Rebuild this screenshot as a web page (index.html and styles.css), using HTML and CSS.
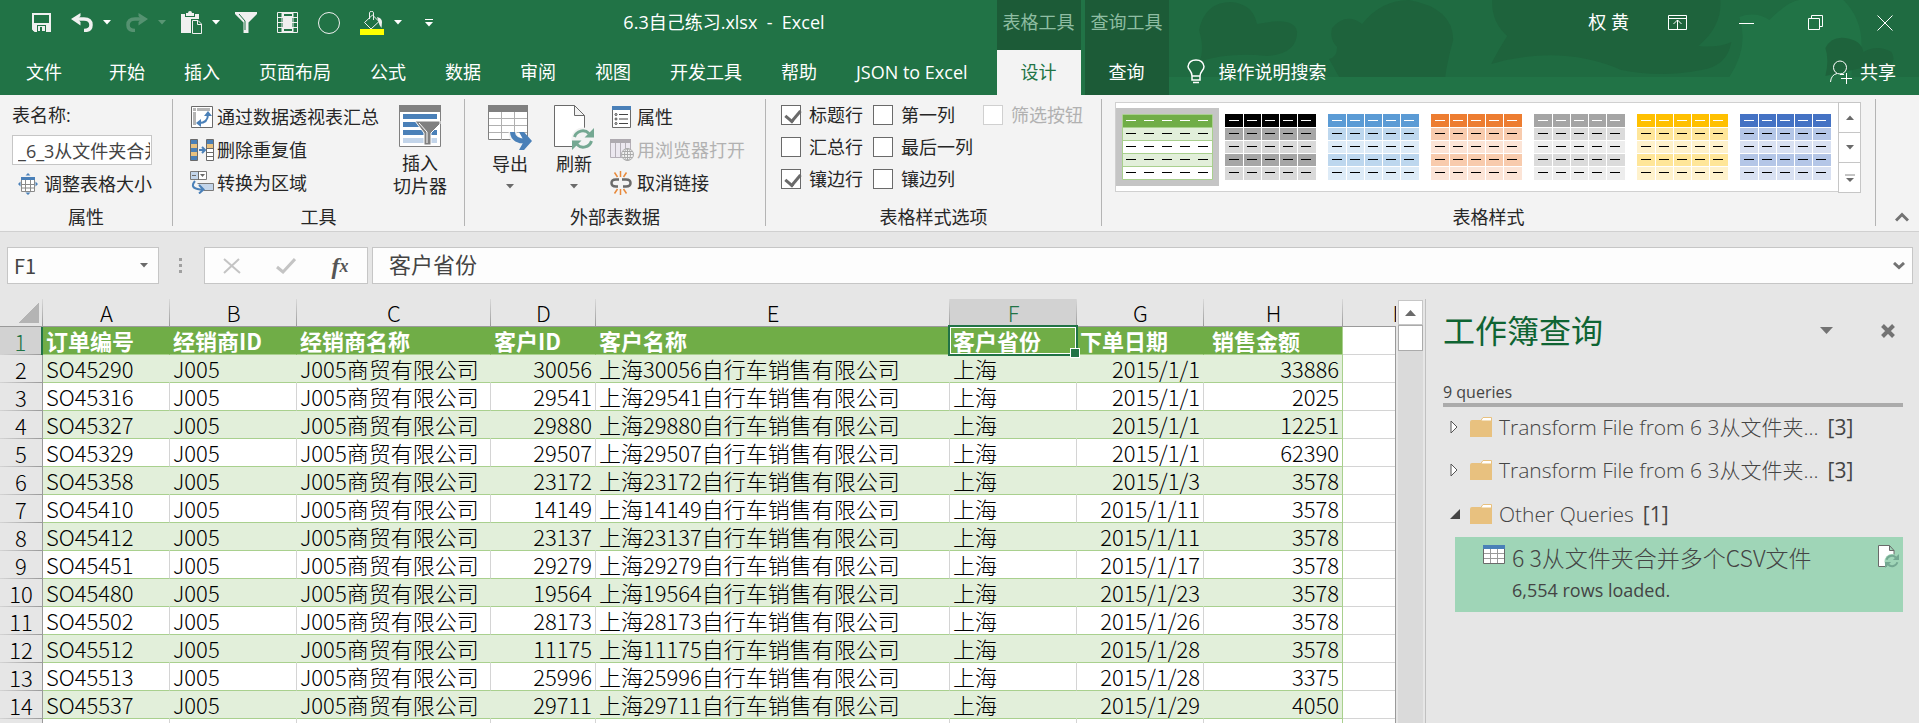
FILE: index.html
```html
<!DOCTYPE html>
<html lang="zh-CN">
<head>
    <meta charset="UTF-8">
    <meta name="viewport" content="width=device-width, initial-scale=1.0">
    <title>6.3自己练习.xlsx - Excel</title>
    <link rel="stylesheet" href="styles.css">
</head>
<body>
    <!-- Shared symbols -->
    <svg class="sprite" aria-hidden="true">
        <symbol id="caret" viewBox="0 0 8 5"><path d="M0 0h8L4 4.5z" fill="currentColor"/></symbol>
        <symbol id="thumb" viewBox="0 0 91 66">
            <path d="M0 0h91v13H0z" fill="var(--head)"/>
            <path d="M0 14h91v12H0zM0 40h91v12H0z" fill="var(--odd)"/>
            <path d="M0 27h91v12H0zM0 53h91v13H0z" fill="var(--even)"/>
            <path d="M18.5 0v66M36.5 0v66M54.5 0v66M72.5 0v66" stroke="#fff"/>
            <path d="M4 6.5h83" stroke="#fff" stroke-dasharray="10 8"/>
            <path d="M4 19.5h83M4 32.5h83M4 45.5h83M4 58.5h83" stroke="#000" stroke-dasharray="10 8"/>
        </symbol>
        <symbol id="thumb-light" viewBox="0 0 91 66">
            <path d="M.5 .5h90v65H.5z" fill="#fff" stroke="#a9d08e"/>
            <path d="M1 1h89v12H1z" fill="#70ad47"/>
            <path d="M1 14h89v12H1zM1 40h89v12H1z" fill="#e2efda"/>
            <path d="M0 13.5h91M0 26.5h91M0 39.5h91M0 52.5h91" stroke="#a9d08e"/>
            <path d="M4 6.5h83" stroke="#fff" stroke-dasharray="10 8"/>
            <path d="M4 19.5h83M4 32.5h83M4 45.5h83M4 58.5h83" stroke="#000" stroke-dasharray="10 8"/>
        </symbol>
        <symbol id="refresh" viewBox="0 0 22 22">
            <path d="M2.500 9A8.700 8.700 0 0 1 17 5.500M19.500 13A8.700 8.700 0 0 1 5 16.500" fill="none" stroke="#74a892" stroke-width="3"/>
            <path d="M22 0v9.500h-9.500zM0 22v-9.500h9.500z" fill="#74a892"/>
        </symbol>
        <symbol id="folder" viewBox="0 0 22 20">
            <path d="M10.500 4 13 .500h8.500V6h-11z" fill="#fff" stroke="#e8c17f"/>
            <path d="M0 5q0-2 2-2h8.500l2 .5H22V20H0z" fill="#e8c17f"/>
        </symbol>
    </svg>

    <header class="app-header">
        <div class="header-main">
            <div class="title-row">
                <div class="qat">
                    <button aria-label="保存" class="single">
                        <svg width="19" height="19" viewBox="0 0 19 19"><path d="M1 1h17v17H3l-2-2z" fill="none" stroke="#f0f0f0" stroke-width="2"/><path d="M1 10h17v8H1z" fill="#f0f0f0"/><path d="M5 12h9v7H5z" fill="#217346"/><path d="M6 13h7v5H6z" fill="#f0f0f0"/><path d="M8 14h2v4H8z" fill="#217346"/></svg>
                    </button>
                    <button aria-label="撤消">
                        <svg width="22" height="19" viewBox="0 0 22 19"><path d="M3 6h10q7 0 7 6 0 5.500-7 5.500" fill="none" stroke="#f0f0f0" stroke-width="3.500"/><path d="M9.500 0v3L6.500 6l3 3v3.500L0 6z" fill="#f0f0f0"/></svg>
                        <svg class="caret"><use href="#caret"/></svg>
                    </button>
                    <button aria-label="恢复" class="dim">
                        <svg width="22" height="19" viewBox="0 0 22 19"><path d="M19 6H9Q2 6 2 12q0 5.500 7 5.500" fill="none" stroke="#f0f0f0" stroke-width="3.500"/><path d="M12.500 0v3l3 3-3 3v3.500L22 6z" fill="#f0f0f0"/></svg>
                        <svg class="caret"><use href="#caret"/></svg>
                    </button>
                    <button aria-label="粘贴">
                        <svg width="21" height="23" viewBox="0 0 21 23"><path d="M0 3h4v3h10V3h4v5h-8v14H0z" fill="#f0f0f0"/><path d="M5 5V2h2q0-2 2-2t2 2h2v3z" fill="#f0f0f0"/><path d="M11.500 9.500h5.500l3.500 3.500v9.500h-9z" fill="#217346" stroke="#f0f0f0"/><path d="M16.500 9.500v4h4" fill="none" stroke="#f0f0f0"/></svg>
                        <svg class="caret"><use href="#caret"/></svg>
                    </button>
                    <button aria-label="筛选" class="single">
                        <svg width="22" height="21" viewBox="0 0 22 21"><path d="M0 0h22v2l-8.500 8.500V21h-5V10.500L0 2z" fill="#f0f0f0"/><path d="M4 2l6 7v9" fill="none" stroke="#217346"/></svg>
                    </button>
                    <button aria-label="表格" class="single">
                        <svg width="21" height="21" viewBox="0 0 21 21"><path d="M.5 .5h20v20H.500zM5 0v21M16 0v21M0 5.500h21M0 10.500h21M0 15.500h21" fill="none" stroke="#f0f0f0"/><path d="M6 6h9v4H6zM6 11h9v4H6zM5 .5h11v5H5zM5 16h11v4H5z" fill="#f0f0f0"/><path d="M7 2h8v2H7zM7 17h8v2H7z" fill="#217346"/></svg>
                    </button>
                    <button aria-label="椭圆" class="single">
                        <svg width="22" height="22" viewBox="0 0 22 22"><circle cx="11" cy="11" r="10.500" fill="none" stroke="#f0f0f0"/></svg>
                    </button>
                    <button aria-label="填充颜色">
                        <svg width="24" height="24" viewBox="0 0 24 24"><path d="M0 18h24v6H0z" fill="#ff0"/><path d="M4.500 11.500 12.500 4l6.500 6.500-8 7.500zM9.500 8V1.500q0-1 2-1t2 1V9" fill="none" stroke="#f0f0f0"/><path d="M17 6q5 1 5 5l-.5 6-2-3z" fill="#f0f0f0"/></svg>
                        <svg class="caret"><use href="#caret"/></svg>
                    </button>
                    <button aria-label="自定义快速访问工具栏" class="more">
                        <svg width="8" height="8" viewBox="0 0 8 8"><path d="M0 .5h8" stroke="#fff"/><path d="M0 3h8L4 7.500z" fill="#fff"/></svg>
                    </button>
                </div>
                <h1 class="doc-title">6.3自己练习.xlsx&nbsp; - &nbsp;Excel</h1>
            </div>
            <nav class="tabs">
                <button>文件</button>
                <button>开始</button>
                <button>插入</button>
                <button>页面布局</button>
                <button>公式</button>
                <button>数据</button>
                <button>审阅</button>
                <button>视图</button>
                <button>开发工具</button>
                <button>帮助</button>
                <button>JSON to Excel</button>
            </nav>
        </div>
        <div class="context-group">
            <span>表格工具</span>
            <button class="active">设计</button>
        </div>
        <div class="context-group">
            <span>查询工具</span>
            <button>查询</button>
        </div>
        <div class="header-side">
            <svg class="header-art" viewBox="0 0 750 77" preserveAspectRatio="none" aria-hidden="true">
                <path d="M0 0h750v77H0z" fill="#1f6b41"/>
                <path d="M30 30Q36 2 62 2q22 2 26 22 38-8 40 8 0 22-30 24-40-4-68 6 6-12 0-32zM163 28q14-16 30-4Q212 0 240 0q44 8 44 40-6 22-8 37H170l-10-18q8-2 8-12-8-8-5-19zM323 0h228q2 26-22 46 20 2 33-4-4 24-30 28-40 8-80 0-60-26-130-6 6-12 16-28-16-14-15-36z" fill="#1e633c"/>
                <path d="M600 20q22-22 34-20h40q20 20 18 50-10 10-10 27H560q20-30 10-60 16-6 30 3z" fill="#217346"/>
                <path d="M656 48q6-12 20-10 16 2 18 14 14-8 28 0 6 10-6 18l-24-2-36 8q4-16 0-28z" fill="#1e633c"/>
            </svg>
            <div class="window-bar">
                <span class="user">权 黄</span>
                <button aria-label="功能区显示选项"><svg width="20" height="16" viewBox="0 0 20 16"><path d="M.5 .5h18v14H.500zM.500 3.500h18M9.500 14V5M5.500 9l4-4 4 4" fill="none" stroke="#fff"/></svg></button>
                <button aria-label="最小化"><svg width="16" height="16" viewBox="0 0 16 16"><path d="M0 8.500h15" stroke="#fff"/></svg></button>
                <button aria-label="还原"><svg width="16" height="16" viewBox="0 0 16 16"><path d="M.5 3.500h11v11H.500zM3.500 3V.500h11v11H12" fill="none" stroke="#fff"/></svg></button>
                <button aria-label="关闭"><svg width="16" height="16" viewBox="0 0 16 16"><path d="M.5 .5l15 15M15.500 .5l-15 15" stroke="#fff"/></svg></button>
            </div>
            <div class="search-row">
                <label for="tell-me" aria-label="搜索">
                    <svg width="18" height="25" viewBox="0 0 18 25"><path d="M5 17q0-3-2-5.500T1 7.500Q2 1 9 1t8 6.500q0 2-2 4.500t-2 5zM5 17v4h8v-4" fill="none" stroke="#fff" stroke-width="1.500"/><path d="M6 23.500h6" stroke="#fff" stroke-width="1.500"/></svg>
                </label>
                <input id="tell-me" type="text" placeholder="操作说明搜索">
                <button class="share">
                    <svg width="22" height="24" viewBox="0 0 22 24"><circle cx="10" cy="7.500" r="6.500" fill="none" stroke="#fff"/><path d="M.5 22Q1 15 7 13.500M10 14.500l4 0M11 18.500h11M16.500 13v11" fill="none" stroke="#fff"/></svg>
                    共享
                </button>
            </div>
        </div>
    </header>

    <section class="ribbon">
        <div class="group group-props">
            <div class="group-body stack">
                <label for="table-name">表名称:</label>
                <input id="table-name" type="text" value="_6_3从文件夹合并多个CSV文件">
                <button class="cmd">
                    <svg width="20" height="22" viewBox="0 0 20 22"><path d="M3.500 4.500h13v14h-13zM7.500 7v11M12.500 7v11M4 11.500h12M4 15h12" fill="#fff" stroke="#8a8a8a"/><path d="M3 4h14v3H3z" fill="#4a80b8"/><path d="M10 0l2.500 2.500h-5zM10 22l2.500-2.500h-5zM0 11l2.500-2.500v5zM20 11l-2.500-2.500v5z" fill="#4a80b8"/></svg>
                    调整表格大小
                </button>
            </div>
            <div class="group-label">属性</div>
        </div>

        <div class="group group-tools">
            <div class="group-body">
                <div class="rows">
                    <button class="cmd">
                        <svg width="24" height="22" viewBox="0 0 24 22"><path d="M1.500 .5h21v21h-21z" fill="#fff" stroke="#6a6a6a"/><path d="M3 2h3v3H3zM7 2h13v3H7zM3 6h3v13H3z" fill="#b5b5b5"/><path d="M9 17q9 0 9-9" fill="none" stroke="#4a80b8" stroke-width="2"/><path d="M14 10l4-5 4 5zM11 13l-5 4 5 4z" fill="#4a80b8"/></svg>
                        通过数据透视表汇总
                    </button>
                    <button class="cmd">
                        <svg width="24" height="22" viewBox="0 0 24 22"><path d="M.5 .5h7v21h-7z" fill="#4a80b8" stroke="#6a6a6a"/><path d="M1 5h6v4H1zM1 13h6v4H1z" fill="#e8c17f"/><path d="M16.500 .5h7v21h-7zM17 9.500h6M17 13.500h6M17 17.500h6" fill="#fff" stroke="#6a6a6a"/><path d="M17 1h6v4h-6z" fill="#4a80b8"/><path d="M17 5h6v4h-6z" fill="#e8c17f"/><path d="M9 11h5M12 8l3 3-3 3" fill="none" stroke="#4a80b8" stroke-width="2"/></svg>
                        删除重复值
                    </button>
                    <button class="cmd">
                        <svg width="24" height="23" viewBox="0 0 24 23"><path d="M.5 .5h16v8H.500z" fill="#fff" stroke="#7a7a7a"/><path d="M1 1h7v7H1z" fill="#c3d5ea"/><path d="M2 4.500h4M8.500 0v9" stroke="#6a6a6a"/><path d="M10 3h5l-2.500 3z" fill="#6a6a6a"/><path d="M7.500 12.500h16v7h-10" fill="#c3d5ea" stroke="#7a7a7a"/><path d="M5 10q-6 7 5 8.500h2M9 14l4.500 4.500L9 22.500" fill="none" stroke="#4a80b8" stroke-width="2"/></svg>
                        转换为区域
                    </button>
                </div>
                <button class="big slicer">
                    <svg width="42" height="42" viewBox="0 0 42 42"><path d="M.5 .5h41v41H.500z" fill="#fff" stroke="#808080"/><path d="M0 0h42v7H0z" fill="#808080"/><path d="M4 9h34v5H4zM4 17h34v5H4zM4 25h34v5H4z" fill="#4a80b8"/><path d="M4 33h34v5H4z" fill="#c3d5ea"/><path d="M16 16h25v3l-9 9v12h-7V28z" fill="#808080" stroke="#fff"/><path d="M20 18l8 9v11" fill="none" stroke="#fff"/></svg>
                    <span>插入<br>切片器</span>
                </button>
            </div>
            <div class="group-label">工具</div>
        </div>

        <div class="group group-data">
            <div class="group-body">
                <button class="big">
                    <svg width="44" height="45" viewBox="0 0 44 45"><path d="M.5 .5h39v34H.500z" fill="#fff" stroke="#808080"/><path d="M13.500 7v28M26.500 7v28M1 13.500h38M1 20.500h38M1 27.500h38" stroke="#b0b0b0"/><path d="M0 0h40v7H0z" fill="#808080"/><path d="M24.500 27Q25 37 36 37" fill="none" stroke="#f3f3f3" stroke-width="8"/><path d="M24.500 27Q25 37 40 36" fill="none" stroke="#4a80b8" stroke-width="5"/><path d="M31 27h5l8 9-8 9h-5l5-9z" fill="#4a80b8"/></svg>
                    <span>导出</span>
                    <svg class="caret"><use href="#caret"/></svg>
                </button>
                <button class="big refresh">
                    <svg width="40" height="45" viewBox="0 0 40 45"><path d="M.5 .5h20l10 10v31H.500zM20.500 .5v10h10" fill="#fff" stroke="#6a6a6a"/><circle cx="29" cy="34" r="11.500" fill="#f3f3f3"/><use href="#refresh" x="18" y="23" width="22" height="22"/></svg>
                    <span>刷新</span>
                    <svg class="caret"><use href="#caret"/></svg>
                </button>
                <div class="rows">
                    <button class="cmd">
                        <svg width="24" height="22" viewBox="0 0 24 22"><path d="M2.500 .5h18v21h-18z" fill="#fff" stroke="#6a6a6a"/><path d="M2 0h19v4H2z" fill="#4a80b8"/><path d="M9 8.500h9M9 13h9M9 17.500h9" stroke="#444"/><circle cx="6" cy="8.500" r="1" fill="none" stroke="#444"/><circle cx="6" cy="13" r="1" fill="none" stroke="#444"/><circle cx="6" cy="17.500" r="1" fill="none" stroke="#444"/></svg>
                        属性
                    </button>
                    <button class="cmd" disabled>
                        <svg width="24" height="22" viewBox="0 0 24 22"><path d="M.5 .5h20v18H.500zM5.500 4v14M10.500 4v14M15.500 4v14" fill="#ece8f0" stroke="#b5b0b8"/><path d="M0 0h21v4H0z" fill="#aeaab0"/><circle cx="17.500" cy="15.500" r="6" fill="#f3f3f3" stroke="#aaa"/><path d="M11.500 15.500h12M17.500 9.500v12M13 12.500h9M13 18.500h9" stroke="#aaa"/><ellipse cx="17.500" cy="15.500" rx="3" ry="6" fill="none" stroke="#aaa"/></svg>
                        用浏览器打开
                    </button>
                    <button class="cmd">
                        <svg width="24" height="24" viewBox="0 0 24 24"><path d="M9 8.500H6Q1.500 8.500 1.500 12T6 15.500h2M12 8.500h4q4.500 0 4.500 3.500T16 15.500h-3" fill="none" stroke="#6a6a6a" stroke-width="2.500"/><path d="M10.500 0v6M4.500 1.500l3 4.500M16.500 1.500l-3 4.500M10.500 18v6M4.500 22.500l3-4.500M16.500 22.500l-3-4.500" stroke="#e88a3c" stroke-width="1.500"/></svg>
                        取消链接
                    </button>
                </div>
            </div>
            <div class="group-label">外部表数据</div>
        </div>

        <div class="group group-options">
            <div class="group-body options">
                <label><input type="checkbox" checked>标题行</label>
                <label><input type="checkbox">第一列</label>
                <label class="off"><input type="checkbox" disabled>筛选按钮</label>
                <label><input type="checkbox">汇总行</label>
                <label class="wide"><input type="checkbox">最后一列</label>
                <label><input type="checkbox" checked>镶边行</label>
                <label><input type="checkbox">镶边列</label>
            </div>
            <div class="group-label">表格样式选项</div>
        </div>

        <div class="group group-styles">
            <div class="group-body">
                <div class="gallery">
                    <button class="selected" aria-label="绿色"><svg><use href="#thumb-light"/></svg></button>
                    <button class="t-black" aria-label="黑色"><svg><use href="#thumb"/></svg></button>
                    <button class="t-blue" aria-label="蓝色"><svg><use href="#thumb"/></svg></button>
                    <button class="t-orange" aria-label="橙色"><svg><use href="#thumb"/></svg></button>
                    <button class="t-gray" aria-label="灰色"><svg><use href="#thumb"/></svg></button>
                    <button class="t-gold" aria-label="金色"><svg><use href="#thumb"/></svg></button>
                    <button class="t-navy" aria-label="深蓝"><svg><use href="#thumb"/></svg></button>
                </div>
                <div class="gallery-nav">
                    <button aria-label="上一行"><svg class="caret up"><use href="#caret"/></svg></button>
                    <button aria-label="下一行"><svg class="caret"><use href="#caret"/></svg></button>
                    <button aria-label="其他"><svg width="10" height="8" viewBox="0 0 10 8"><path d="M0 1h10" stroke="#8a8a8a"/><path d="M1 4h8L5 8z" fill="#6a6a6a"/></svg></button>
                </div>
            </div>
            <div class="group-label">表格样式</div>
        </div>

        <button class="collapse" aria-label="折叠功能区">
            <svg width="14" height="10" viewBox="0 0 14 10"><path d="M1 8.500l6-6 6 6" fill="none" stroke="#737373" stroke-width="3"/></svg>
        </button>
    </section>

    <div class="formula-bar">
        <div class="name-box">
            <input type="text" value="F1" aria-label="名称框">
            <svg class="caret"><use href="#caret"/></svg>
        </div>
        <svg class="dots" width="3" height="15" viewBox="0 0 3 15"><path d="M0 0h3v3H0zM0 6h3v3H0zM0 12h3v3H0z" fill="#a0a0a0"/></svg>
        <div class="formula-actions">
            <button aria-label="取消"><svg width="18" height="16" viewBox="0 0 18 16"><path d="M1 1l16 14M16 1 1 15" stroke="#c4c4c4" stroke-width="2"/></svg></button>
            <button aria-label="输入"><svg width="20" height="16" viewBox="0 0 20 16"><path d="M1 9l6 5L19 1" fill="none" stroke="#c4c4c4" stroke-width="3"/></svg></button>
            <button class="fx" aria-label="插入函数"><i>f</i><i class="x">x</i></button>
        </div>
        <div class="formula-input">
            <input type="text" value="客户省份" aria-label="编辑栏">
            <svg width="12" height="8" viewBox="0 0 12 8"><path d="M1 1l5 4.500L11 1" fill="none" stroke="#737373" stroke-width="3"/></svg>
        </div>
    </div>

    <main class="workspace">
        <div class="sheet">
            <table class="grid">
                <colgroup>
                    <col class="c-row"><col class="c-std"><col class="c-std"><col class="c-dealer"><col class="c-id">
                    <col class="c-customer"><col class="c-std"><col class="c-std"><col class="c-amount"><col class="c-extra">
                </colgroup>
                <thead>
                    <tr>
                        <th class="corner"></th>
                        <th>A</th><th>B</th><th>C</th><th>D</th><th>E</th><th class="current">F</th><th>G</th><th>H</th><th>I</th>
                    </tr>
                </thead>
                <tbody id="rows">
                    <tr class="table-head">
                        <th class="current">1</th>
                        <td>订单编号</td><td>经销商ID</td><td>经销商名称</td><td>客户ID</td><td>客户名称</td>
                        <td class="selected-cell">客户省份</td><td>下单日期</td><td>&nbsp;销售金额</td><td></td>
                    </tr>
                </tbody>
            </table>
        </div>

        <div class="scrollbar">
            <button aria-label="向上滚动"><svg width="11" height="6" viewBox="0 0 11 6"><path d="M0 6h11L5.500 0z" fill="#6a6a6a"/></svg></button>
            <div class="scroll-thumb"></div>
        </div>

        <aside class="queries">
            <div class="queries-head">
                <h2>工作簿查询</h2>
                <button aria-label="选项"><svg width="13" height="7" viewBox="0 0 13 7"><path d="M0 0h13L6.500 7z" fill="#737373"/></svg></button>
                <button aria-label="关闭"><svg width="14" height="14" viewBox="0 0 14 14"><path d="M1.500 1.500l11 11M12.500 1.500l-11 11" stroke="#737373" stroke-width="4"/></svg></button>
            </div>
            <p class="query-count">9 queries</p>
            <ul class="query-list">
                <li>
                    <svg class="twisty" width="10" height="14" viewBox="0 0 10 14"><path d="M1 1l6 6-6 6z" fill="#fff" stroke="#555"/></svg>
                    <svg class="folder"><use href="#folder"/></svg>
                    <span>Transform File from 6 3从文件夹...</span><b>[3]</b>
                </li>
                <li>
                    <svg class="twisty" width="10" height="14" viewBox="0 0 10 14"><path d="M1 1l6 6-6 6z" fill="#fff" stroke="#555"/></svg>
                    <svg class="folder"><use href="#folder"/></svg>
                    <span>Transform File from 6 3从文件夹...</span><b>[3]</b>
                </li>
                <li>
                    <svg class="twisty" width="10" height="10" viewBox="0 0 10 10"><path d="M10 0v10H0z" fill="#444"/></svg>
                    <svg class="folder"><use href="#folder"/></svg>
                    <span>Other Queries</span><b>[1]</b>
                </li>
            </ul>
            <div class="query-card">
                <svg width="22" height="19" viewBox="0 0 22 19"><path d="M.5 .5h21v18H.500z" fill="#fff" stroke="#6a6a6a"/><path d="M7.500 4v14M14.500 4v14M1 8.500h20M1 13.500h20" stroke="#9a9a9a"/><path d="M0 0h22v4H0z" fill="#4a80b8"/></svg>
                <div class="query-text">
                    <h3>6 3从文件夹合并多个CSV文件</h3>
                    <p>6,554 rows loaded.</p>
                </div>
                <svg width="21" height="24" viewBox="0 0 21 24"><path d="M.5 .5h11l4.500 5v16H.500zM11.500 .5v5h4.500" fill="#fff" stroke="#6a6a6a"/><circle cx="14" cy="16.500" r="7.500" fill="#9fd5b7"/><use href="#refresh" x="7" y="9" width="14" height="14"/></svg>
            </div>
        </aside>
    </main>

    <script>
        const orders = [
            ['SO45290', 30056, '2015/1/1', 33886],
            ['SO45316', 29541, '2015/1/1', 2025],
            ['SO45327', 29880, '2015/1/1', 12251],
            ['SO45329', 29507, '2015/1/1', 62390],
            ['SO45358', 23172, '2015/1/3', 3578],
            ['SO45410', 14149, '2015/1/11', 3578],
            ['SO45412', 23137, '2015/1/11', 3578],
            ['SO45451', 29279, '2015/1/17', 3578],
            ['SO45480', 19564, '2015/1/23', 3578],
            ['SO45502', 28173, '2015/1/26', 3578],
            ['SO45512', 11175, '2015/1/28', 3578],
            ['SO45513', 25996, '2015/1/28', 3375],
            ['SO45537', 29711, '2015/1/29', 4050]
        ];

        const rows = orders.map(([order, customer, date, amount], i) => `
            <tr>
                <th>${i + 2}</th>
                <td>${order}</td>
                <td>J005</td>
                <td>J005商贸有限公司</td>
                <td class="num">${customer}</td>
                <td>上海${customer}自行车销售有限公司</td>
                <td>上海</td>
                <td class="num">${date}</td>
                <td class="num">${amount}</td>
                <td></td>
            </tr>
        `).join('');

        // blank row that runs off the bottom of the sheet
        const tail = '<tr><th></th>' + '<td></td>'.repeat(9) + '</tr>';
        document.getElementById('rows').insertAdjacentHTML('beforeend', rows + tail);
    </script>
</body>
</html>
```
FILE: styles.css
```css
* {
    margin: 0;
    padding: 0;
    box-sizing: border-box;
}

body {
    display: flex;
    flex-direction: column;
    height: 100vh;
    overflow: hidden;
    background: #e6e6e6;
    color: #262626;
    font-family: "Open Sans", "Noto Sans CJK SC", sans-serif;
    font-size: 18px;
    line-height: 24px;
}

button,
input {
    font: inherit;
    color: inherit;
    background: none;
    border: none;
}

button {
    display: flex;
    align-items: center;
    white-space: nowrap;
}

svg {
    flex: none;
    display: block;
}

.sprite {
    position: absolute;
    width: 0;
    height: 0;
}

.caret {
    width: 8px;
    height: 5px;
}

.caret.up {
    transform: rotate(180deg);
}

/* Title bar and tabs */
.app-header {
    display: flex;
    flex: none;
    height: 95px;
    background: #217346;
    color: #fff;
}

.header-main {
    flex: none;
}

.title-row {
    display: flex;
    align-items: center;
    height: 45px;
}

.qat {
    display: flex;
    align-items: center;
    gap: 15px;
    padding-left: 32px;
}

.qat button {
    gap: 10px;
}

.qat .single {
    margin-right: 5px;
}

.qat .more {
    margin-left: 8px;
}

.qat .dim {
    opacity: 0.25;
}

.doc-title {
    margin-left: auto;
    padding: 0 172px 2px 0;
    font-size: 18px;
    font-weight: 400;
}

.tabs {
    display: flex;
    height: 50px;
    padding: 3px 9px 0 7px;
}

.tabs button {
    padding: 0 20px 0 19px;
}

.tabs button:first-child {
    margin-right: 8px;
}

.context-group {
    flex: none;
    display: flex;
    flex-direction: column;
    width: 84px;
    margin-right: 4px;
    background: #1c5b37;
}

.context-group + .context-group {
    margin-right: 0;
}

.context-group span {
    height: 50px;
    line-height: 45px;
    text-align: center;
    color: #8ebda2;
}

.context-group button {
    flex: 1;
    justify-content: center;
    padding-bottom: 2px;
}

.context-group .active {
    background: #f3f3f3;
    color: #217346;
}

.header-side {
    position: relative;
    flex: 1;
    display: flex;
    flex-direction: column;
}

.header-art {
    position: absolute;
    top: 0;
    left: 0;
    width: 100%;
    height: 77px;
}

.window-bar,
.search-row {
    position: relative;
    display: flex;
    align-items: center;
}

.window-bar {
    height: 45px;
    justify-content: flex-end;
}

.window-bar button {
    justify-content: center;
    width: 69px;
    height: 45px;
}

.user {
    margin-right: 14px;
    padding-bottom: 2px;
}

.search-row {
    height: 50px;
    padding: 3px 23px 0 18px;
}

.search-row input {
    flex: 1;
    min-width: 0;
    padding-left: 14px;
}

.search-row input::placeholder {
    color: #fff;
    opacity: 1;
}

.share {
    gap: 8px;
}

/* Ribbon */
.ribbon {
    display: flex;
    flex: none;
    height: 137px;
    padding: 4px 0 5px;
    background: #f3f3f3;
    border-bottom: 1px solid #d0d0d0;
}

.group {
    flex: none;
    display: flex;
    flex-direction: column;
    border-right: 1px solid #b4b4b4;
}

.group-body {
    flex: none;
    display: flex;
    height: 109px;
}

.group-label {
    line-height: 18px;
    text-align: center;
}

.group-props { width: 173px; }
.group-tools { width: 292px; }
.group-data { width: 301px; }
.group-options { width: 336px; }

.stack {
    flex-direction: column;
    padding: 4px 20px 0 12px;
}

.stack label {
    height: 32px;
}

.stack input {
    width: 140px;
    height: 30px;
    padding: 0 1px 0 5px;
    background: #fff;
    border: 1px solid #c6c6c6;
    color: #444;
}

.stack .cmd {
    height: 38px;
    gap: 6px;
    padding-left: 6px;
}

.rows {
    display: flex;
    flex-direction: column;
}

.rows .cmd {
    height: 33px;
    gap: 3px;
}

.group-tools .group-body {
    padding: 1px 0 0 17px;
}

.cmd:disabled {
    color: #b1b1b1;
}

.big {
    flex-direction: column;
    align-self: flex-start;
    padding-top: 5px;
    line-height: 23px;
    text-align: center;
}

.big svg:first-child {
    margin-bottom: 3px;
}

.big span + .caret {
    margin-top: 8px;
    color: #6a6a6a;
}

.slicer {
    margin-left: 14px;
}

.slicer svg:first-child {
    margin-bottom: 5px;
}

.group-data .group-body {
    padding: 1px 0 0 23px;
}

.refresh {
    margin: 0 16px 0 22px;
}

.options {
    display: grid;
    grid-template-columns: 92px 110px 110px;
    grid-template-rows: repeat(3, 32px);
    align-content: start;
    padding-left: 15px;
}

.options label {
    display: flex;
    align-items: center;
    gap: 8px;
}

.options .wide {
    grid-column: span 2;
}

.options .off {
    color: #b1b1b1;
}

.options input {
    appearance: none;
    width: 20px;
    height: 20px;
    background: #fff;
    border: 1px solid #6a6a6a;
}

.options input:disabled {
    border-color: #d0d0d0;
}

.options input:checked::before {
    content: "";
    display: block;
    width: 7px;
    height: 12px;
    margin: 1px 0 0 6px;
    border: solid #6a6a6a;
    border-width: 0 3px 3px 0;
    transform: rotate(40deg);
}

.group-styles {
    flex: 1;
}

.group-styles .group-body {
    padding: 3px 14px 0 13px;
}

.gallery {
    flex: 1;
    display: flex;
    align-items: center;
    height: 90px;
    overflow: hidden;
    background: #fff;
    border: 1px solid #d0d0d0;
    border-right: none;
}

.gallery button {
    flex: none;
    padding: 6px;
}

.gallery svg {
    width: 91px;
    height: 66px;
}

.gallery .selected {
    background: #c5c5c5;
}

.t-black { --head: #000; --odd: #a6a6a6; --even: #d9d9d9; }
.t-blue { --head: #5b9bd5; --odd: #bdd7ee; --even: #ddebf7; }
.t-orange { --head: #ed7d31; --odd: #f8cbad; --even: #fce4d6; }
.t-gray { --head: #a5a5a5; --odd: #dbdbdb; --even: #ededed; }
.t-gold { --head: #ffc000; --odd: #ffe699; --even: #fff2cc; }
.t-navy { --head: #4472c4; --odd: #b4c6e7; --even: #d9e1f2; }

.gallery-nav {
    display: flex;
    flex-direction: column;
    width: 23px;
    height: 91px;
    background: #fff;
    border: 1px solid #c6c6c6;
}

.gallery-nav button {
    flex: 1;
    justify-content: center;
    color: #6a6a6a;
}

.gallery-nav button + button {
    border-top: 1px solid #c6c6c6;
}

.collapse {
    align-self: flex-end;
    justify-content: center;
    width: 43px;
    height: 18px;
    padding-left: 8px;
}

/* Formula bar */
.formula-bar {
    display: flex;
    flex: none;
    align-items: center;
    padding: 15px 6px 15px 7px;
    color: #444;
}

.name-box,
.formula-actions,
.formula-input {
    display: flex;
    align-items: center;
    height: 37px;
    background: #fdfdfd;
    border: 1px solid #c6c6c6;
}

.name-box {
    width: 152px;
    padding: 0 10px 0 6px;
    color: #6a6a6a;
}

.name-box input {
    flex: 1;
    min-width: 0;
    color: #444;
    font-family: "Noto Sans CJK SC", sans-serif;
    font-size: 20px;
}

.dots {
    margin: 0 22px 0 20px;
}

.formula-actions {
    width: 164px;
    margin-right: 4px;
}

.formula-actions button {
    flex: 1;
    justify-content: center;
}

.fx {
    color: #555;
    font-family: "Liberation Serif", serif;
    font-size: 24px;
    font-weight: 700;
}

.fx .x {
    align-self: flex-end;
    font-size: 18px;
}

.formula-input {
    flex: 1;
    padding: 0 7px 0 16px;
}

.formula-input input {
    flex: 1;
    padding-bottom: 4px;
    font-size: 22px;
    line-height: 30px;
}

/* Worksheet */
.workspace {
    flex: 1;
    display: flex;
    min-height: 0;
}

.sheet {
    position: relative;
    flex: 1;
    min-width: 0;
    overflow-x: clip;
}

.sheet::after {
    content: "";
    position: absolute;
    top: 28px;
    right: 0;
    bottom: 0;
    border-right: 1px solid #9a9a9a;
}

.grid {
    table-layout: fixed;
    width: 1448px;
    border-collapse: separate;
    border-spacing: 0;
    color: #000;
    font-family: "Noto Sans CJK SC", sans-serif;
    font-size: 22px;
    font-weight: 300;
    line-height: 27px;
}

.c-row { width: 43px; }
.c-std { width: 127px; }
.c-dealer { width: 194px; }
.c-id { width: 105px; }
.c-customer { width: 354px; }
.c-amount { width: 139px; }
.c-extra { width: 105px; }

.grid th {
    height: 28px;
    font-weight: 300;
    background: linear-gradient(90deg, #d4d4d4, #9a9a9a) bottom / 100% 1px no-repeat;
    border-right: 1px solid #9a9a9a;
}

.grid thead th {
    background: linear-gradient(#d9d9d9, #9a9a9a) right / 1px 100% no-repeat;
    border-right: none;
    border-bottom: 1px solid #9a9a9a;
}

.grid thead .corner {
    background:
        linear-gradient(135deg, transparent 50%, #b4b4b4 50%) 19px 4px / 20px 20px no-repeat,
        linear-gradient(#d9d9d9, #9a9a9a) right / 1px 100% no-repeat;
}

.grid .current,
.grid thead .current {
    background-color: #d2d2d2;
    color: #217346;
}

.grid tbody .current {
    border-right: 2px solid #217346;
}

.grid td {
    height: 28px;
    padding: 0 3px;
    white-space: nowrap;
    background: #fff;
    border-right: 1px solid #d4d4d4;
    border-bottom: 1px solid #a9d08e;
}

.grid .num {
    text-align: right;
}

.grid tbody tr:nth-child(even) td {
    background: #e2efda;
    border-right-color: #e2efda;
}

.grid .table-head td {
    background: #70ad47;
    border-right-color: #70ad47;
    color: #fff;
    font-weight: 700;
}

.grid tbody tr td:nth-child(9) {
    border-right-color: #a9d08e;
}

.grid tbody tr td:last-child {
    background: #fff;
    border-color: #d4d4d4;
}

.grid .selected-cell {
    position: relative;
}

.selected-cell::before {
    content: "";
    position: absolute;
    inset: -2px;
    border: 2px solid #217346;
    box-shadow: inset 0 0 0 1px #fff;
}

.selected-cell::after {
    content: "";
    position: absolute;
    right: -4px;
    bottom: -4px;
    width: 8px;
    height: 8px;
    background: #217346;
    border: 1px solid #fff;
}

.scrollbar {
    width: 25px;
    margin: 1px 2px 0;
    background: #dadada;
}

.scrollbar button {
    justify-content: center;
    width: 25px;
    height: 25px;
    background: #fff;
    border: 1px solid #c6c6c6;
}

.scroll-thumb {
    height: 26px;
    background: #fff;
    border: 1px solid #ababab;
}

/* Queries pane */
.queries {
    width: 494px;
    padding: 0 16px 0 17px;
    border-left: 1px solid #c0c0c0;
    color: #444;
}

.queries-head {
    display: flex;
    align-items: center;
    height: 63px;
    gap: 48px;
    padding-right: 8px;
}

.queries-head h2 {
    flex: 1;
    color: #0f6433;
    font-size: 32px;
    font-weight: 400;
    line-height: 40px;
}

.query-count {
    padding-top: 19px;
    font-size: 16px;
    line-height: 22px;
    border-bottom: 4px solid #ababab;
}

.query-list {
    list-style: none;
    font-size: 21px;
    font-weight: 300;
}

.query-list li {
    display: flex;
    align-items: center;
    height: 44px;
    padding: 0 0 2px 7px;
}

.query-list li:first-child {
    height: 42px;
}

.query-list b {
    margin-left: 9px;
    font-weight: 400;
}

.twisty {
    margin-right: 10px;
}

.folder {
    width: 22px;
    height: 20px;
    margin-right: 7px;
}

.query-card {
    display: flex;
    align-items: flex-start;
    height: 75px;
    margin-left: 12px;
    padding: 8px 4px 0 28px;
    background: #9fd5b7;
}

.query-text {
    flex: 1;
    padding-left: 7px;
}

.query-text h3 {
    font-family: "Noto Sans CJK SC", sans-serif;
    font-size: 23px;
    font-weight: 300;
    line-height: 24px;
}

.query-text p {
    padding-top: 9px;
    font-size: 18px;
}
```
